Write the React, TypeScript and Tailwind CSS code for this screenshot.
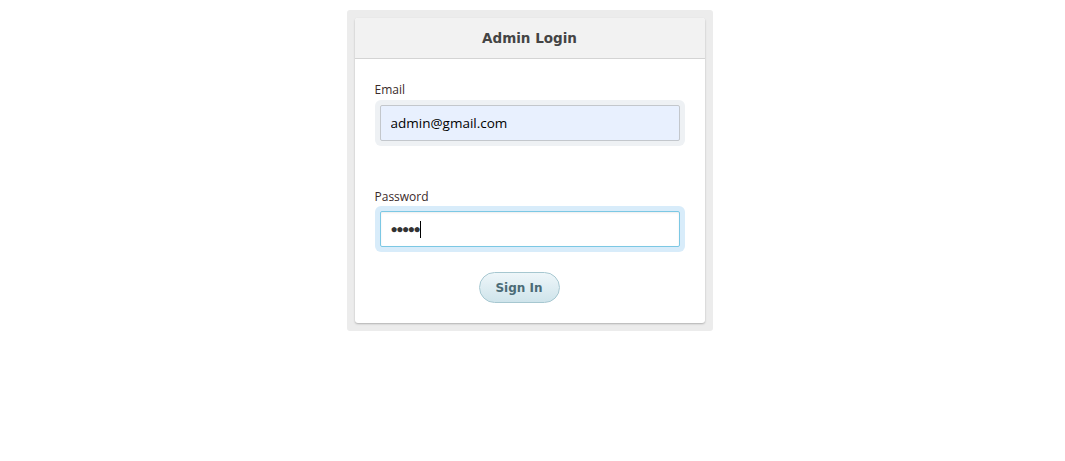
export default function App() {
  return (
    <div className="min-h-[461px] bg-white pt-[10px]">
      <div className="mx-auto w-[366px] translate-x-[-3px] rounded-[3px] bg-[#ececec] p-[8px]">
        <div className="overflow-hidden rounded-[3px] bg-white shadow-[0_1px_2px_rgba(0,0,0,0.25)]">
          <div className="flex h-[41px] items-center justify-center border-b border-[#d4d4d4] bg-[#f2f2f2]">
            <h1 className="font-['DejaVu_Sans',Verdana,sans-serif] text-[13.5px] font-bold text-[#444]">Admin Login</h1>
          </div>
          <form className="px-[20px] pb-[20px] pt-[23px] font-['Open_Sans',sans-serif]">
            <label className="block text-[12px] leading-[16px] text-[#3a2a2a]">Email</label>
            <div className="mt-[2px] rounded-[6px] bg-[#eef1f4] p-[5px]">
              <input
                type="text"
                defaultValue="admin@gmail.com"
                className="block h-[36px] w-full rounded-[2px] border border-[#c3c7cc] bg-[#e8f0fe] px-[10px] text-[13.5px] text-black outline-none"
              />
            </div>
            <label className="mt-[43px] block text-[12px] leading-[16px] text-[#3a2a2a]">Password</label>
            <div className="mt-[1px] rounded-[6px] bg-[#d8ecfa] p-[5px]">
              <div className="flex h-[36px] w-full items-center rounded-[2px] border border-[#7cc8e4] bg-white px-[10px] shadow-[inset_0_1px_2px_rgba(0,0,0,0.08)]">
                <span className="text-[12px] tracking-[-1.5px] text-[#333]">●●●●●</span>
                <span className="ml-[1px] h-[17px] w-px bg-black" />
              </div>
            </div>
            <div className="mt-[20px] flex justify-center pr-[21px]">
              <button
                type="button"
                className="h-[31px] w-[81px] rounded-full border border-[#a6c7d0] bg-gradient-to-b from-[#eef6f9] to-[#cfe4eb] font-['DejaVu_Sans',Verdana,sans-serif] text-[12px] font-bold text-[#4b6b76]"
              >
                Sign In
              </button>
            </div>
          </form>
        </div>
      </div>
    </div>
  );
}
